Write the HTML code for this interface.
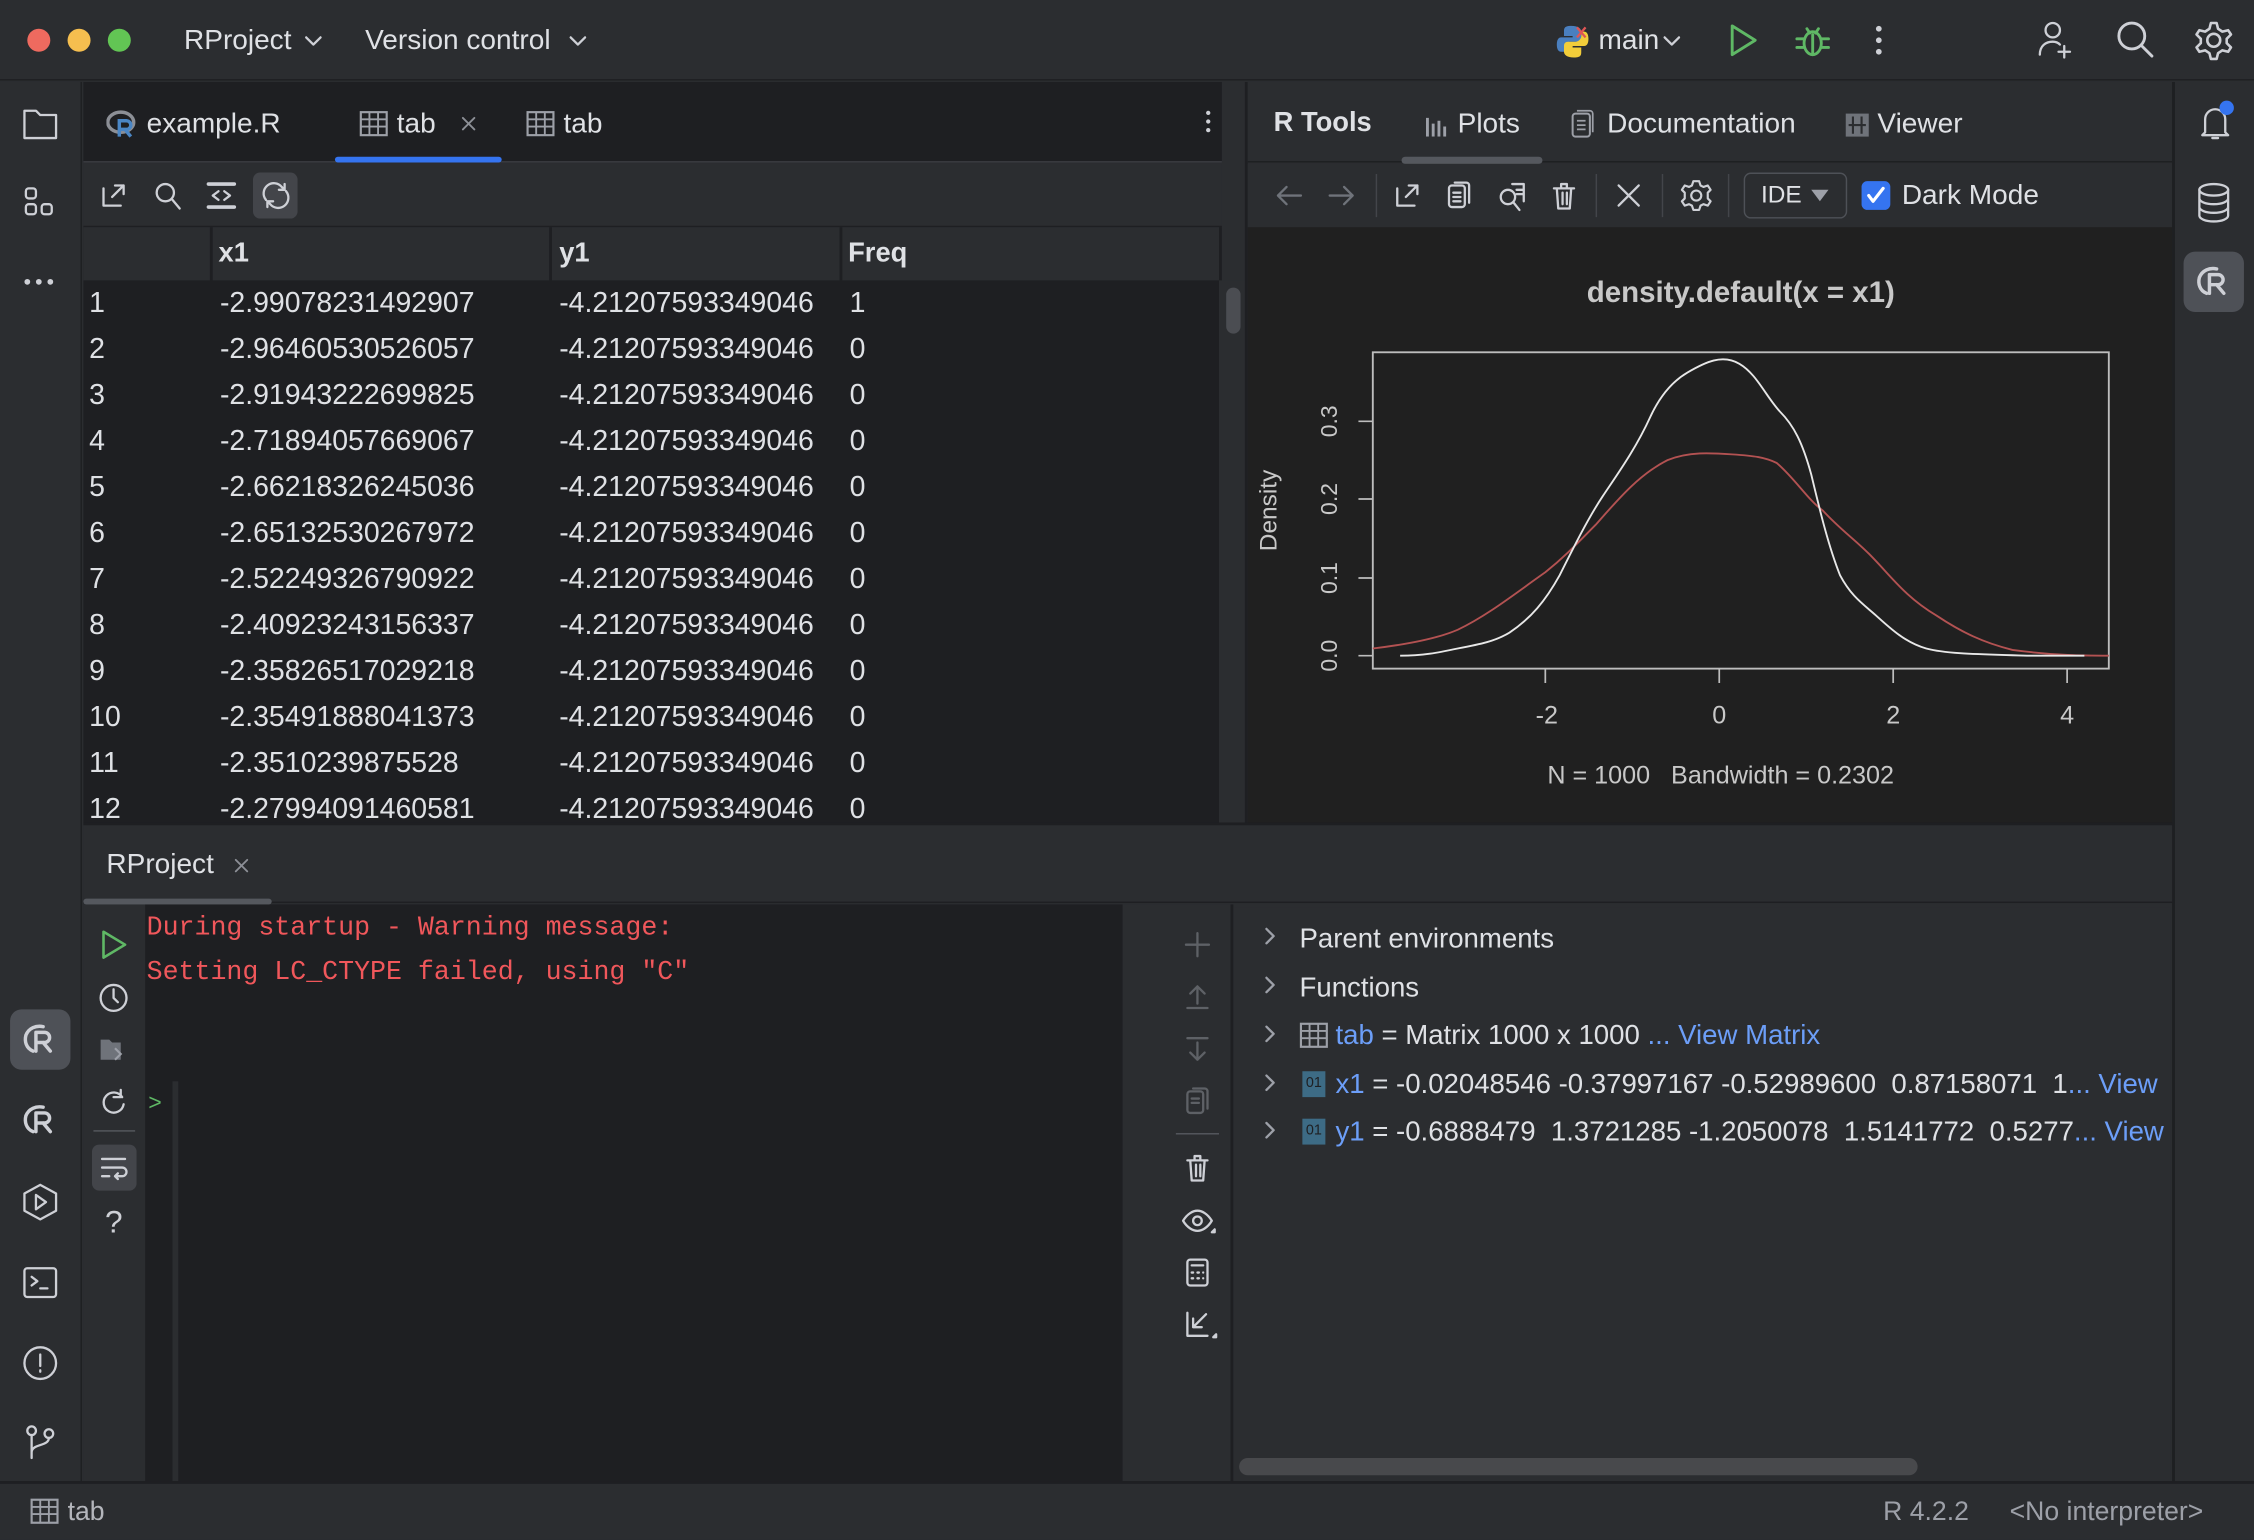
<!DOCTYPE html>
<html><head><meta charset="utf-8">
<style>
*{margin:0;padding:0;box-sizing:border-box}
html,body{width:2254px;height:1540px;overflow:hidden;background:#1e1f22}
#w{position:absolute;left:0;top:0;width:1568px;height:1071px;transform:scale(1.4375,1.4379);transform-origin:0 0;background:#2b2d30;font-family:"Liberation Sans",sans-serif;color:#dfe1e5;font-size:18px;overflow:hidden}
.a{position:absolute}
.t{position:absolute;white-space:nowrap}
svg.i{position:absolute;fill:none;stroke:#ced0d6;stroke-width:1.6;stroke-linecap:round;stroke-linejoin:round}
.mono{font-family:"Liberation Mono",monospace}
.row{position:absolute;left:0;width:790px;height:32px;line-height:32px}
.row span{position:absolute}
.gray{color:#9da0a8}
.blue{color:#6c9ef8}
</style></head><body><div id="w">

<!-- title bar -->
<div class="a" style="left:0;top:0;width:1568px;height:56px;background:#2b2d30;border-bottom:1px solid #1e1f22"></div>
<div class="a" style="left:19px;top:20px;width:16px;height:16px;border-radius:50%;background:#ee6a5f"></div>
<div class="a" style="left:47px;top:20px;width:16px;height:16px;border-radius:50%;background:#f5be4f"></div>
<div class="a" style="left:75px;top:20px;width:16px;height:16px;border-radius:50%;background:#62c554"></div>
<div class="t" style="left:128px;top:17px;font-size:19.5px">RProject</div>
<svg class="i" style="left:210px;top:20px" width="16" height="16"><path d="M3 6l5 5 5-5"/></svg>
<div class="t" style="left:254px;top:17px;font-size:19.5px">Version control</div>
<svg class="i" style="left:394px;top:20px" width="16" height="16"><path d="M3 6l5 5 5-5"/></svg>
<svg class="a" style="left:1082px;top:16px" width="24" height="26"><path d="M11 2c-5 0-5 2-5 4v3h6v1H4c-2 0-3 2-3 5s1 5 3 5h2v-3c0-2 2-4 4-4h5c2 0 3-1 3-3V6c0-2-2-4-7-4z" fill="#4a7fbf"/><path d="M13 24c5 0 5-2 5-4v-3h-6v-1h8c2 0 3-2 3-5s-1-5-3-5h-2v3c0 2-2 4-4 4H9c-2 0-3 1-3 3v4c0 2 2 4 7 4z" fill="#f2cd3a"/><path d="M15 3l6 7M21 3l-6 7" stroke="#e05555" stroke-width="1.6"/></svg>
<div class="t" style="left:1112px;top:17px;font-size:19.5px">main</div>
<svg class="i" style="left:1156px;top:21px" width="14" height="14"><path d="M2 5l5 5 5-5"/></svg>
<svg class="i" style="left:1200px;top:15px;stroke:#5fb865;stroke-width:2" width="26" height="26"><path d="M5 3l16 10-16 10z"/></svg>
<svg class="i" style="left:1247px;top:14px;stroke:#5fb865;stroke-width:2" width="28" height="28"><ellipse cx="14" cy="16" rx="6" ry="8"/><path d="M10 6l2 3M18 6l-2 3M8 13H3M8 19H3M20 13h5M20 19h5M14 10v14"/></svg>
<div class="a" style="left:1305px;top:18px;width:4px;height:4px;border-radius:2px;background:#ced0d6;box-shadow:0 8px 0 #ced0d6,0 16px 0 #ced0d6"></div>
<svg class="i" style="left:1415px;top:13px" width="30" height="30"><circle cx="13" cy="8" r="5"/><path d="M4 25c0-6 4-9 9-9 2 0 4 1 5 2M21 19v8M17 23h8"/></svg>
<svg class="i" style="left:1471px;top:13px;stroke-width:2" width="30" height="30"><circle cx="12" cy="12" r="9"/><path d="M19 19l7 7"/></svg>
<svg class="i" style="left:1525px;top:13px;stroke-width:1.8" width="30" height="30"><circle cx="15" cy="15" r="4.5"/><path d="M13 3h4l1 4 3 2 4-1 2 3-3 3v3l3 3-2 3-4-1-3 2-1 4h-4l-1-4-3-2-4 1-2-3 3-3v-3l-3-3 2-3 4 1 3-2z"/></svg>

<!-- left stripe -->
<div class="a" style="left:0;top:57px;width:57px;height:974px;background:#2b2d30;border-right:1px solid #1e1f22"></div>
<svg class="i" style="left:14px;top:72px" width="28" height="28"><path d="M3 5h8l3 3h11v16H3z"/></svg>
<svg class="i" style="left:14px;top:127px" width="28" height="28"><rect x="4" y="4" width="7" height="7" rx="2"/><rect x="4" y="15" width="7" height="7" rx="2"/><rect x="15" y="15" width="7" height="7" rx="2"/></svg>
<div class="a" style="left:17px;top:194px;width:4px;height:4px;border-radius:2px;background:#ced0d6;box-shadow:8px 0 0 #ced0d6,16px 0 0 #ced0d6"></div>
<div class="a" style="left:7px;top:702px;width:42px;height:42px;border-radius:8px;background:#4e5157"></div>
<svg class="i" style="left:14px;top:709px;stroke-width:2.4" width="28" height="28"><path d="M9 22C4 20 3 15 4 11c2-5 7-7 12-6"/><path d="M11 22V9h6a3.5 3.5 0 0 1 0 7h-6M16 16l5 6"/></svg>
<svg class="i" style="left:14px;top:765px;stroke-width:2.4" width="28" height="28"><path d="M9 22C4 20 3 15 4 11c2-5 7-7 12-6"/><path d="M11 22V9h6a3.5 3.5 0 0 1 0 7h-6M16 16l5 6"/></svg>
<svg class="i" style="left:13px;top:821px" width="30" height="30"><path d="M15 3l11 6v12l-11 6-11-6V9z"/><path d="M12 10l7 5-7 5z"/></svg>
<svg class="i" style="left:13px;top:877px" width="30" height="30"><rect x="4" y="5" width="22" height="20" rx="2"/><path d="M9 11l4 3-4 3M15 19h5"/></svg>
<svg class="i" style="left:13px;top:933px" width="30" height="30"><circle cx="15" cy="15" r="11"/><path d="M15 9v8M15 20v1"/></svg>
<svg class="i" style="left:13px;top:988px" width="30" height="30"><circle cx="9" cy="7" r="3"/><circle cx="21" cy="9" r="3"/><path d="M9 10v16M21 12c0 6-12 4-12 10"/></svg>

<!-- editor tabs -->
<div class="a" style="left:58px;top:57px;width:792px;height:56px;background:#1e1f22;border-bottom:1px solid #393b40"></div>
<svg class="a" style="left:74px;top:76px" width="22" height="20"><ellipse cx="10" cy="9" rx="9" ry="7" fill="none" stroke="#8c8f96" stroke-width="2.4"/><path d="M9 19V8h5a3 3 0 0 1 0 6H9M13 14l4 5" fill="none" stroke="#4a86c5" stroke-width="2.4"/></svg>
<div class="t" style="left:102px;top:75px;font-size:19.5px">example.R</div>
<svg class="a" style="left:250px;top:77px" width="20" height="18"><rect x="1" y="1" width="18" height="16" fill="none" stroke="#9da0a8" stroke-width="1.5"/><path d="M1 6h18M1 11h18M7 1v16M13 1v16" stroke="#9da0a8" stroke-width="1.3"/></svg>
<div class="t" style="left:276px;top:75px;font-size:19.5px">tab</div>
<svg class="i" style="left:319px;top:79px;stroke:#8c8f96;stroke-width:1.3" width="14" height="14"><path d="M3 3l8 8M11 3l-8 8"/></svg>
<div class="a" style="left:233px;top:109px;width:116px;height:4px;border-radius:2px;background:#3574f0"></div>
<svg class="a" style="left:366px;top:77px" width="20" height="18"><rect x="1" y="1" width="18" height="16" fill="none" stroke="#9da0a8" stroke-width="1.5"/><path d="M1 6h18M1 11h18M7 1v16M13 1v16" stroke="#9da0a8" stroke-width="1.3"/></svg>
<div class="t" style="left:392px;top:75px;font-size:19.5px">tab</div>
<div class="a" style="left:839px;top:77px;width:3px;height:3px;border-radius:2px;background:#ced0d6;box-shadow:0 6px 0 #ced0d6,0 12px 0 #ced0d6"></div>

<!-- table toolbar -->
<div class="a" style="left:58px;top:114px;width:792px;height:44px;background:#2b2d30;border-bottom:1px solid #1e1f22"></div>
<svg class="i" style="left:68px;top:125px" width="22" height="22"><path d="M4 6v12h12M10 12L18 4M12 4h6v6"/></svg>
<svg class="i" style="left:106px;top:125px" width="22" height="22"><circle cx="9" cy="9" r="6"/><path d="M14 14l5 6"/></svg>
<svg class="i" style="left:143px;top:125px" width="22" height="22"><path d="M2 3h18M2 19h18" stroke-width="2.5"/><path d="M9 8l-4 3 4 3M13 8l4 3-4 3"/></svg>
<div class="a" style="left:176px;top:120px;width:31px;height:32px;border-radius:5px;background:#43454a"></div>
<svg class="i" style="left:180px;top:125px" width="24" height="22"><path d="M5 14a7 7 0 0 1 11-9l2 2M19 8a7 7 0 0 1-11 9l-2-2M18 3v4h-4M6 19v-4h4"/></svg>

<!-- table -->
<div class="a" style="left:58px;top:158px;width:792px;height:414px;background:#1e1f22"></div>
<div class="a" style="left:58px;top:158px;width:790px;height:37px;background:#2b2d30"></div>
<div class="a" style="left:146px;top:158px;width:2px;height:37px;background:#1e1f22"></div>
<div class="a" style="left:382px;top:158px;width:2px;height:37px;background:#1e1f22"></div>
<div class="a" style="left:584px;top:158px;width:2px;height:37px;background:#1e1f22"></div>
<div class="t" style="left:152px;top:166px;font-weight:bold;font-size:19px">x1</div>
<div class="t" style="left:389px;top:166px;font-weight:bold;font-size:19px">y1</div>
<div class="t" style="left:590px;top:166px;font-weight:bold;font-size:19px">Freq</div>
<div class="a" style="left:58px;top:195px;width:790px;height:377px;font-size:19.8px;overflow:hidden">
<div class="row" style="top:0"><span style="left:4px">1</span><span style="left:95px">-2.99078231492907</span><span style="left:331px">-4.21207593349046</span><span style="left:533px">1</span></div>
<div class="row" style="top:32px"><span style="left:4px">2</span><span style="left:95px">-2.96460530526057</span><span style="left:331px">-4.21207593349046</span><span style="left:533px">0</span></div>
<div class="row" style="top:64px"><span style="left:4px">3</span><span style="left:95px">-2.91943222699825</span><span style="left:331px">-4.21207593349046</span><span style="left:533px">0</span></div>
<div class="row" style="top:96px"><span style="left:4px">4</span><span style="left:95px">-2.71894057669067</span><span style="left:331px">-4.21207593349046</span><span style="left:533px">0</span></div>
<div class="row" style="top:128px"><span style="left:4px">5</span><span style="left:95px">-2.66218326245036</span><span style="left:331px">-4.21207593349046</span><span style="left:533px">0</span></div>
<div class="row" style="top:160px"><span style="left:4px">6</span><span style="left:95px">-2.65132530267972</span><span style="left:331px">-4.21207593349046</span><span style="left:533px">0</span></div>
<div class="row" style="top:192px"><span style="left:4px">7</span><span style="left:95px">-2.52249326790922</span><span style="left:331px">-4.21207593349046</span><span style="left:533px">0</span></div>
<div class="row" style="top:224px"><span style="left:4px">8</span><span style="left:95px">-2.40923243156337</span><span style="left:331px">-4.21207593349046</span><span style="left:533px">0</span></div>
<div class="row" style="top:256px"><span style="left:4px">9</span><span style="left:95px">-2.35826517029218</span><span style="left:331px">-4.21207593349046</span><span style="left:533px">0</span></div>
<div class="row" style="top:288px"><span style="left:4px">10</span><span style="left:95px">-2.35491888041373</span><span style="left:331px">-4.21207593349046</span><span style="left:533px">0</span></div>
<div class="row" style="top:320px"><span style="left:4px">11</span><span style="left:95px">-2.3510239875528</span><span style="left:331px">-4.21207593349046</span><span style="left:533px">0</span></div>
<div class="row" style="top:352px"><span style="left:4px">12</span><span style="left:95px">-2.27994091460581</span><span style="left:331px">-4.21207593349046</span><span style="left:533px">0</span></div>
</div>
<div class="a" style="left:848px;top:195px;width:20px;height:377px;background:#2b2d30"></div>
<div class="a" style="left:853px;top:200px;width:10px;height:32px;border-radius:5px;background:#4b4d52"></div>
<div class="a" style="left:866px;top:57px;width:2px;height:515px;background:#1e1f22"></div>

<!-- right tool window -->
<div class="a" style="left:868px;top:57px;width:643px;height:56px;background:#2b2d30;border-bottom:1px solid #1e1f22"></div>
<div class="t" style="left:886px;top:75px;font-size:19px;font-weight:bold">R Tools</div>
<svg class="a" style="left:991px;top:79px" width="18" height="16"><path d="M2 3v13M6 7v9M10 5v11M14 9v7" stroke="#9da0a8" stroke-width="2"/></svg>
<div class="t" style="left:1014px;top:75px;font-size:19.5px">Plots</div>
<div class="a" style="left:975px;top:109px;width:98px;height:5px;border-radius:3px;background:#55585e"></div>
<svg class="a" style="left:1092px;top:75px" width="18" height="22"><rect x="2" y="4" width="12" height="16" rx="2" fill="none" stroke="#9da0a8" stroke-width="1.4"/><path d="M5 2h9a2 2 0 0 1 2 2v13M5 9h6M5 12h6M5 15h6" fill="none" stroke="#9da0a8" stroke-width="1.2"/></svg>
<div class="t" style="left:1118px;top:75px;font-size:19.5px">Documentation</div>
<svg class="a" style="left:1283px;top:78px" width="18" height="18"><rect x="1" y="1" width="16" height="16" fill="#6f737a"/><path d="M6 3v12M12 3v12M3 9h12" stroke="#2b2d30" stroke-width="1.5"/></svg>
<div class="t" style="left:1306px;top:75px;font-size:19.5px">Viewer</div>

<div class="a" style="left:868px;top:114px;width:643px;height:44px;background:#2b2d30"></div>
<svg class="i" style="left:886px;top:126px;stroke:#6f737a" width="22" height="20"><path d="M19 10H3M9 4l-6 6 6 6"/></svg>
<svg class="i" style="left:922px;top:126px;stroke:#6f737a" width="22" height="20"><path d="M3 10h16M13 4l6 6-6 6"/></svg>
<div class="a" style="left:957px;top:121px;width:1px;height:30px;background:#43454a"></div>
<svg class="i" style="left:968px;top:125px" width="22" height="22"><path d="M4 6v12h12M10 12L18 4M12 4h6v6"/></svg>
<svg class="i" style="left:1004px;top:124px" width="22" height="24"><rect x="4" y="5" width="11" height="15" rx="2"/><path d="M8 3h8a2 2 0 0 1 2 2v12M7 10h5M7 13h5M7 16h5"/></svg>
<svg class="i" style="left:1040px;top:124px" width="24" height="24"><circle cx="9" cy="13" r="5"/><path d="M13 17l4 5M12 4h8v12M15 8h5M15 11h5"/></svg>
<svg class="i" style="left:1077px;top:124px" width="22" height="24"><path d="M4 7h14M9 7V4h4v3M6 7l1 14h8l1-14M10 10v8M13 10v8"/></svg>
<div class="a" style="left:1110px;top:121px;width:1px;height:30px;background:#43454a"></div>
<svg class="i" style="left:1122px;top:125px" width="22" height="22"><path d="M4 4l14 14M18 4L4 18"/></svg>
<div class="a" style="left:1156px;top:121px;width:1px;height:30px;background:#43454a"></div>
<svg class="i" style="left:1168px;top:124px;stroke-width:1.5" width="24" height="24"><circle cx="12" cy="12" r="3.5"/><path d="M10 2h4l1 3 2 1 3-1 2 3-2 2v4l2 2-2 3-3-1-2 1-1 3h-4l-1-3-2-1-3 1-2-3 2-2v-4l-2-2 2-3 3 1 2-1z"/></svg>
<div class="a" style="left:1202px;top:121px;width:1px;height:30px;background:#43454a"></div>
<div class="a" style="left:1213px;top:120px;width:72px;height:32px;border:1.5px solid #4e5157;border-radius:5px"></div>
<div class="t" style="left:1225px;top:126px;font-size:17px">IDE</div>
<svg class="a" style="left:1259px;top:131px" width="14" height="10"><path d="M1 1h12L7 9z" fill="#9da0a8"/></svg>
<div class="a" style="left:1295px;top:126px;width:20px;height:20px;border-radius:4px;background:#3574f0"></div>
<svg class="i" style="left:1297px;top:128px;stroke:#fff;stroke-width:2.2" width="16" height="16"><path d="M3 8l3 4 7-9"/></svg>
<div class="t" style="left:1323px;top:125px;font-size:19.5px">Dark Mode</div>

<!-- plot -->
<div class="a" style="left:868px;top:158px;width:643px;height:414px;background:#202020"></div>
<svg class="a" style="left:868px;top:158px" width="643" height="414">
<g transform="translate(-868,-158)" font-family="Liberation Sans, sans-serif" fill="#c8c8c8">
<text x="1211" y="210" text-anchor="middle" font-size="20.5" font-weight="bold" fill="#c8c8c8">density.default(x = x1)</text>
<rect x="955" y="245" width="512" height="220" fill="none" stroke="#bdbdbd" stroke-width="1.3"/>
<path d="M1075 465v10M1196 465v10M1317 465v10M1438 465v10M955 456h-10M955 402h-10M955 347h-10M955 293h-10" stroke="#bdbdbd" stroke-width="1.2"/>
<text x="1076" y="503" text-anchor="middle" font-size="17.5">-2</text>
<text x="1196" y="503" text-anchor="middle" font-size="17.5">0</text>
<text x="1317" y="503" text-anchor="middle" font-size="17.5">2</text>
<text x="1438" y="503" text-anchor="middle" font-size="17.5">4</text>
<g font-size="16" text-anchor="middle">
<text transform="translate(930,456) rotate(-90)">0.0</text>
<text transform="translate(930,402) rotate(-90)">0.1</text>
<text transform="translate(930,347) rotate(-90)">0.2</text>
<text transform="translate(930,293) rotate(-90)">0.3</text>
<text transform="translate(888,355) rotate(-90)" font-size="17">Density</text>
</g>
<text x="1197" y="545" text-anchor="middle" font-size="17.5">N = 1000&#160;&#160;&#160;Bandwidth = 0.2302</text>
<path d="M955 451 C980 448 1000 444 1014 438 C1035 428 1055 412 1075 398 C1090 386 1100 375 1110 365 C1125 348 1140 330 1160 320 C1175 314 1190 315 1205 316 C1220 317 1228 318 1236 322 C1248 332 1258 348 1268 355 C1280 368 1290 375 1300 385 C1315 400 1325 415 1347 428 C1365 440 1380 447 1400 452 C1430 456 1450 456 1467 456" fill="none" stroke="#b35252" stroke-width="1.3"/>
<path d="M974 456 C990 456 1000 454 1014 451 C1030 448 1040 446 1050 440 C1065 430 1075 418 1085 400 C1095 380 1105 360 1115 345 C1125 330 1138 312 1148 290 C1154 277 1162 266 1174 259 C1186 252 1198 246 1210 253 C1222 260 1228 275 1238 286 C1248 296 1254 308 1260 330 C1266 355 1272 380 1280 400 C1288 415 1296 420 1305 428 C1316 438 1326 447 1340 451 C1355 455 1380 455 1410 456 C1430 456 1448 456 1450 456" fill="none" stroke="#e8e8e8" stroke-width="1.3"/>
</g></svg>

<!-- right stripe -->
<div class="a" style="left:1511px;top:57px;width:2px;height:974px;background:#1e1f22"></div>
<svg class="i" style="left:1526px;top:70px" width="30" height="30"><path d="M8 22V13a7 7 0 0 1 14 0v9l2 2H6zM13 26h4"/></svg>
<div class="a" style="left:1544px;top:70px;width:10px;height:10px;border-radius:5px;background:#3574f0"></div>
<svg class="i" style="left:1526px;top:126px" width="28" height="30"><ellipse cx="14" cy="6" rx="10" ry="4"/><path d="M4 6v18c0 2 4 4 10 4s10-2 10-4V6M4 12c0 2 4 4 10 4s10-2 10-4M4 18c0 2 4 4 10 4s10-2 10-4"/></svg>
<div class="a" style="left:1519px;top:175px;width:42px;height:42px;border-radius:8px;background:#4e5157"></div>
<svg class="i" style="left:1526px;top:182px;stroke-width:2.4" width="28" height="28"><path d="M9 22C4 20 3 15 4 11c2-5 7-7 12-6"/><path d="M11 22V9h6a3.5 3.5 0 0 1 0 7h-6M16 16l5 6"/></svg>

<!-- bottom panel -->
<div class="a" style="left:58px;top:572px;width:1453px;height:2px;background:#1e1f22"></div>
<div class="a" style="left:58px;top:574px;width:1453px;height:54px;background:#2b2d30;border-bottom:1px solid #1e1f22"></div>
<div class="t" style="left:74px;top:590px;font-size:19.5px">RProject</div>
<svg class="i" style="left:161px;top:595px;stroke:#8c8f96;stroke-width:1.3" width="14" height="14"><path d="M3 3l8 8M11 3l-8 8"/></svg>
<div class="a" style="left:58px;top:625px;width:131px;height:4px;border-radius:2px;background:#55585e"></div>

<div class="a" style="left:58px;top:629px;width:43px;height:402px;background:#2b2d30"></div>
<div class="a" style="left:101px;top:629px;width:680px;height:402px;background:#1e1f22"></div>
<div class="a" style="left:120px;top:752px;width:4px;height:279px;background:#2b2d30"></div>
<svg class="i" style="left:68px;top:645px;stroke:#5fb865;stroke-width:1.8" width="22" height="24"><path d="M4 3l15 9-15 9z"/></svg>
<svg class="i" style="left:68px;top:683px" width="22" height="22"><circle cx="11" cy="11" r="9"/><path d="M11 5v6l3 3"/></svg>
<svg class="a" style="left:68px;top:719px" width="22" height="22"><path d="M2 4h6l2 2h6v12H2z" fill="#6f737a"/><path d="M12 10l4 4-4 4" stroke="#9da0a8" fill="none" stroke-width="1.5"/></svg>
<svg class="i" style="left:68px;top:755px" width="22" height="22"><path d="M17 8a7 7 0 1 0 1 5M16 3v5h-5"/></svg>
<div class="a" style="left:65px;top:786px;width:29px;height:1px;background:#55585e"></div>
<div class="a" style="left:64px;top:796px;width:31px;height:32px;border-radius:5px;background:#43454a"></div>
<svg class="i" style="left:68px;top:801px" width="22" height="22"><path d="M3 5h16M3 11h14a3 3 0 0 1 0 6h-5M14 15l-2 2 2 2M3 17h5"/></svg>
<div class="t" style="left:73px;top:837px;font-size:22px;color:#ced0d6">?</div>
<div class="t mono" style="left:102px;top:635px;font-size:18.5px;color:#f0575b">During startup - Warning message:</div>
<div class="t mono" style="left:102px;top:666px;font-size:18.5px;color:#f0575b">Setting LC_CTYPE failed, using "C"</div>
<div class="t mono" style="left:103px;top:759px;font-size:16px;color:#5fb865">&gt;</div>

<div class="a" style="left:781px;top:629px;width:75px;height:402px;background:#2b2d30"></div>
<svg class="i" style="left:822px;top:646px;stroke:#5e6166" width="22" height="22"><path d="M11 3v16M3 11h16"/></svg>
<svg class="i" style="left:822px;top:682px;stroke:#5e6166" width="22" height="22"><path d="M11 16V4M6 9l5-5 5 5M4 19h14"/></svg>
<svg class="i" style="left:822px;top:719px;stroke:#5e6166" width="22" height="22"><path d="M11 6v12M6 13l5 5 5-5M4 3h14"/></svg>
<svg class="i" style="left:822px;top:754px;stroke:#5e6166" width="22" height="24"><rect x="4" y="5" width="11" height="15" rx="2"/><path d="M8 3h8a2 2 0 0 1 2 2v12M7 10h5M7 13h5"/></svg>
<div class="a" style="left:818px;top:788px;width:30px;height:1px;background:#55585e"></div>
<svg class="i" style="left:822px;top:800px" width="22" height="24"><path d="M4 7h14M9 7V4h4v3M6 7l1 14h8l1-14M10 10v8M13 10v8"/></svg>
<svg class="i" style="left:821px;top:837px" width="26" height="24"><path d="M2 12c3-5 7-7 10-7s7 2 10 7c-3 5-7 7-10 7s-7-2-10-7z"/><circle cx="12" cy="12" r="3"/><path d="M22 20l2-2v2z" fill="#ced0d6"/></svg>
<svg class="i" style="left:822px;top:873px" width="22" height="24"><rect x="4" y="3" width="14" height="18" rx="2"/><path d="M7 7h8M7 12h1M11 12h1M15 12h0M7 16h1M11 16h1M15 16h0"/></svg>
<svg class="i" style="left:822px;top:909px" width="26" height="24"><path d="M4 4v16h14M17 5L8 14M8 8v6h6"/><path d="M22 21l2-2v2z" fill="#ced0d6"/></svg>

<div class="a" style="left:856px;top:629px;width:2px;height:402px;background:#1e1f22"></div>
<div class="a" style="left:858px;top:631px;width:652px;height:400px;background:#2b2d30"></div>
<div style="position:absolute;left:858px;top:637px;font-size:19.2px">
<svg class="i" style="left:20px;top:7px;stroke:#9da0a8" width="12" height="14"><path d="M3 2l5 5-5 5"/></svg>
<div class="t" style="left:46px;top:6px">Parent environments</div>
<svg class="i" style="left:20px;top:41px;stroke:#9da0a8" width="12" height="14"><path d="M3 2l5 5-5 5"/></svg>
<div class="t" style="left:46px;top:40px">Functions</div>
<svg class="i" style="left:20px;top:75px;stroke:#9da0a8" width="12" height="14"><path d="M3 2l5 5-5 5"/></svg>
<svg class="a" style="left:46px;top:74px" width="20" height="18"><rect x="1" y="1" width="18" height="16" fill="none" stroke="#9da0a8" stroke-width="1.5"/><path d="M1 6h18M1 11h18M7 1v16M13 1v16" stroke="#9da0a8" stroke-width="1.3"/></svg>
<div class="t" style="left:71px;top:73px"><span class="blue">tab</span> = Matrix 1000 x 1000 <span class="blue">... View Matrix</span></div>
<svg class="i" style="left:20px;top:109px;stroke:#9da0a8" width="12" height="14"><path d="M3 2l5 5-5 5"/></svg>
<div class="a" style="left:48px;top:108px;width:16px;height:18px;background:#3d6b85;color:#1e1f22;font-size:10px;line-height:18px;text-align:center">01</div>
<div class="t" style="left:71px;top:107px"><span class="blue">x1</span> = -0.02048546 -0.37997167 -0.52989600&nbsp; 0.87158071&nbsp; 1<span class="blue">... View</span></div>
<svg class="i" style="left:20px;top:142px;stroke:#9da0a8" width="12" height="14"><path d="M3 2l5 5-5 5"/></svg>
<div class="a" style="left:48px;top:141px;width:16px;height:18px;background:#3d6b85;color:#1e1f22;font-size:10px;line-height:18px;text-align:center">01</div>
<div class="t" style="left:71px;top:140px"><span class="blue">y1</span> = -0.6888479&nbsp; 1.3721285 -1.2050078&nbsp; 1.5141772&nbsp; 0.5277<span class="blue">... View</span></div>
</div>
<div class="a" style="left:862px;top:1014px;width:472px;height:12px;border-radius:6px;background:#48494c"></div>

<!-- status bar -->
<div class="a" style="left:0;top:1030px;width:1568px;height:2px;background:#1e1f22"></div>
<div class="a" style="left:0;top:1032px;width:1568px;height:39px;background:#2b2d30"></div>
<svg class="a" style="left:21px;top:1042px" width="20" height="18"><rect x="1" y="1" width="18" height="16" fill="none" stroke="#9da0a8" stroke-width="1.5"/><path d="M1 6h18M1 11h18M7 1v16M13 1v16" stroke="#9da0a8" stroke-width="1.3"/></svg>
<div class="t" style="left:47px;top:1040px;font-size:18.5px;color:#b4b6bc">tab</div>
<div class="t" style="left:1310px;top:1040px;font-size:18.5px;color:#9da0a8">R 4.2.2</div>
<div class="t" style="left:1398px;top:1040px;font-size:18.5px;color:#9da0a8">&lt;No interpreter&gt;</div>
</div></body></html>
